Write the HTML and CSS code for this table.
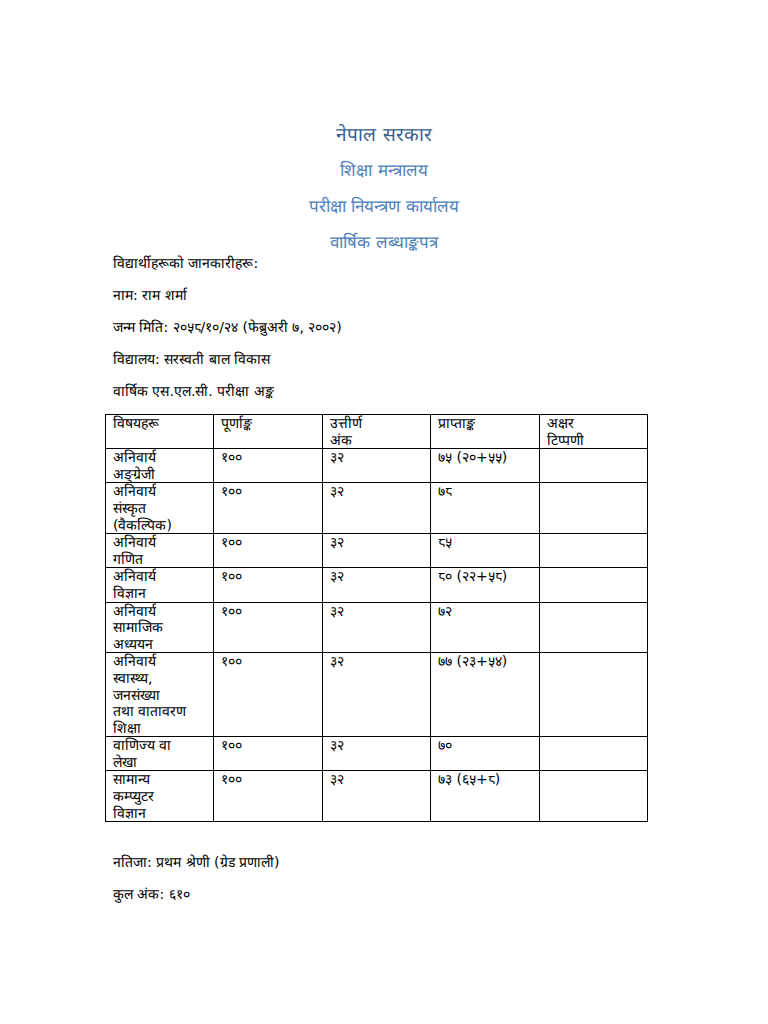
FILE: index.html
```html
<!DOCTYPE html>
<html lang="ne">
<head>
<meta charset="utf-8">
<title>वार्षिक लब्धाङ्कपत्र</title>
<link rel="stylesheet" href="styles.css">
</head>
<body>
<main class="page">
  <header class="titles">
    <h1 class="t1">नेपाल सरकार</h1>
    <h2 class="t2">शिक्षा मन्त्रालय</h2>
    <h2 class="t2">परीक्षा नियन्त्रण कार्यालय</h2>
    <h2 class="t2">वार्षिक लब्धाङ्कपत्र</h2>
  </header>
  <section class="content">
    <p>विद्यार्थीहरूको जानकारीहरू:</p>
    <p>नाम: राम शर्मा</p>
    <p>जन्म मिति: २०५८/१०/२४ (फेब्रुअरी ७, २००२)</p>
    <p>विद्यालय: सरस्वती बाल विकास</p>
    <p>वार्षिक एस.एल.सी. परीक्षा अङ्क</p>
    <table class="marks">
      <tr><td>विषयहरू</td><td>पूर्णाङ्क</td><td>उत्तीर्ण<br>अंक</td><td>प्राप्ताङ्क</td><td>अक्षर<br>टिप्पणी</td></tr>
      <tr><td>अनिवार्य<br>अङ्ग्रेजी</td><td>१००</td><td>३२</td><td>७५ (२०+५५)</td><td></td></tr>
      <tr><td>अनिवार्य<br>संस्कृत<br>(वैकल्पिक)</td><td>१००</td><td>३२</td><td>७८</td><td></td></tr>
      <tr><td>अनिवार्य<br>गणित</td><td>१००</td><td>३२</td><td>८५</td><td></td></tr>
      <tr><td>अनिवार्य<br>विज्ञान</td><td>१००</td><td>३२</td><td>८० (२२+५८)</td><td></td></tr>
      <tr><td>अनिवार्य<br>सामाजिक<br>अध्ययन</td><td>१००</td><td>३२</td><td>७२</td><td></td></tr>
      <tr><td>अनिवार्य<br>स्वास्थ्य,<br>जनसंख्या<br>तथा वातावरण<br>शिक्षा</td><td>१००</td><td>३२</td><td>७७ (२३+५४)</td><td></td></tr>
      <tr><td>वाणिज्य वा<br>लेखा</td><td>१००</td><td>३२</td><td>७०</td><td></td></tr>
      <tr><td>सामान्य<br>कम्प्युटर<br>विज्ञान</td><td>१००</td><td>३२</td><td>७३ (६५+८)</td><td></td></tr>
    </table>
    <p class="after">नतिजा: प्रथम श्रेणी (ग्रेड प्रणाली)</p>
    <p>कुल अंक: ६१०</p>
  </section>
</main>
</body>
</html>
```

FILE: styles.css
```css
html, body {
  margin: 0;
  background: #ffffff;
}
body {
  font-family: "DejaVu Sans", sans-serif;
  font-size: 14px;
  color: #000000;
}
.page {
  width: 768px;
}
.titles {
  padding-top: 122px;
  text-align: center;
}
.t1, .t2 {
  margin: 0;
  font-weight: normal;
  line-height: 24px;
}
.t1 {
  font-size: 19px;
  color: #365f91;
}
.t2 {
  font-size: 17px;
  color: #4f81bd;
  margin-top: 12px;
}
.content {
  padding-left: 113px;
}
.content p {
  margin: 0 0 14px;
  line-height: 18px;
}
.content p.after {
  margin-top: 31px;
}
.marks {
  margin: 3px 0 0 -8px;
  width: 543px;
  table-layout: fixed;
  border-collapse: collapse;
}
.marks td {
  border: 1px solid #000;
  vertical-align: top;
  padding: 0 7px;
  line-height: 16.6px;
  width: 20%;
}
```
